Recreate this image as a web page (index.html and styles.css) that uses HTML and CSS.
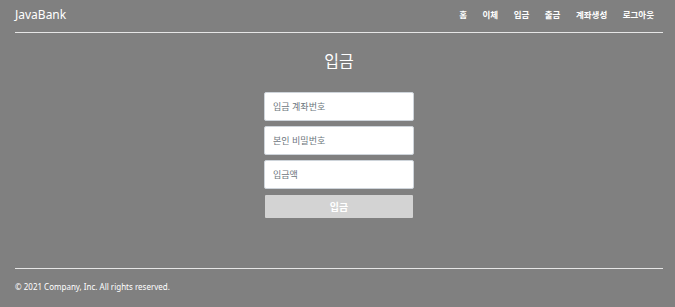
FILE: index.html
```html
<!DOCTYPE html>
<html lang="ko">
<head>
<meta charset="utf-8">
<link rel="stylesheet" href="styles.css">
</head>
<body>
<header class="header">
  <div class="brand">JavaBank</div>
  <nav class="nav">
    <a>홈</a><a>이체</a><a>입금</a><a>출금</a><a>계좌생성</a><a>로그아웃</a>
  </nav>
</header>
<main class="main">
  <h1 class="title">입금</h1>
  <form class="form">
    <input class="field" type="text" placeholder="입금 계좌번호">
    <input class="field" type="password" placeholder="본인 비밀번호">
    <input class="field" type="text" placeholder="입금액">
    <button class="btn" type="button">입금</button>
  </form>
</main>
<footer class="footer">
  <p>© 2021 Company, Inc. All rights reserved.</p>
</footer>
</body>
</html>
```
FILE: styles.css
```css
* { box-sizing: border-box; }
html, body { margin: 0; padding: 0; }
body {
  background: #808080;
  width: 675px;
  height: 307px;
  font-family: "Noto Sans", "Noto Sans CJK KR", sans-serif;
  color: #fff;
  overflow: hidden;
}
.header {
  margin: 0 12px 0 15px;
  height: 33px;
  border-bottom: 1px solid #e6e6e6;
  display: flex;
  align-items: center;
  justify-content: space-between;
}
.brand {
  font-size: 12px;
  line-height: 16px;
  margin-top: -3px;
}
.nav {
  display: flex;
  gap: 15.5px;
  margin-right: 9px;
  margin-top: -4px;
}
.nav a {
  font-size: 8.5px;
  font-weight: 700;
  font-family: "Noto Sans CJK KR", sans-serif;
  color: #fff;
}
.main {
  display: flex;
  flex-direction: column;
  align-items: center;
  height: 235px;
  padding-left: 3px;
}
.title {
  margin: 16px 0 0;
  font-size: 16px;
  font-weight: 400;
  line-height: 22px;
  font-family: "Noto Sans CJK KR", sans-serif;
}
.form {
  margin-top: 21px;
  width: 150px;
  display: flex;
  flex-direction: column;
  gap: 5px;
}
.field {
  width: 150px;
  height: 29px;
  border: 1px solid #ced4da;
  border-radius: 2px;
  background: #fff;
  padding: 0 8px;
  font-size: 9px;
  font-family: "Noto Sans CJK KR", sans-serif;
  outline: none;
}
.field::placeholder { color: #6c757d; }
.btn {
  margin: 1px 1px 0;
  width: 148px;
  height: 23px;
  border: none;
  background: #d3d3d3;
  color: #fff;
  font-weight: 700;
  font-size: 10px;
  font-family: "Noto Sans CJK KR", sans-serif;
  border-radius: 1px;
}
.footer {
  margin: 0 12px 0 15px;
  border-top: 1px solid #e6e6e6;
}
.footer p {
  margin: 12px 0 0;
  font-size: 8px;
  line-height: 12px;
}
```
